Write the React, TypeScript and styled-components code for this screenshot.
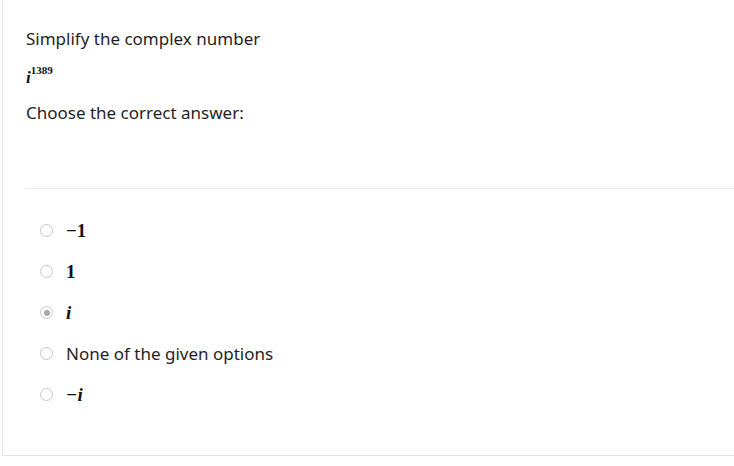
import React from "react";
import styled, { createGlobalStyle } from "styled-components";

const Global = createGlobalStyle`
  html, body { margin: 0; padding: 0; background: #ffffff; overflow: hidden; }
  body { font-family: "Noto Sans", "Open Sans", sans-serif; color: #1f1f1f; }
`;

const Card = styled.div`
  margin-left: 2px;
  width: 760px;
  height: 456px;
  box-sizing: border-box;
  border-left: 1px solid #e4e4e4;
  border-bottom: 1px solid #e4e4e4;
  padding: 28px 0 0 23px;
  display: flex;
  flex-direction: column;
`;

const Prompt = styled.div`
  font-size: 17px;
  line-height: 22px;
  color: #1f1f1f;
`;

const MathLine = styled.div`
  margin-top: 15px;
  height: 22px;
  line-height: 22px;
  font-family: "Liberation Serif", "DejaVu Serif", serif;
  color: #111;
`;

const MathI = styled.span`
  font-style: italic;
  font-weight: bold;
  font-size: 17px;
`;

const Sup = styled.span`
  display: inline-block;
  font-weight: bold;
  font-size: 11px;
  line-height: 11px;
  vertical-align: 9px;
`;

const Instruction = styled.div`
  margin-top: 15px;
  font-size: 17px;
  line-height: 22px;
`;

const Divider = styled.div`
  margin-top: 64px;
  height: 1px;
  background: #ececec;
`;

const Options = styled.div`
  margin-top: 21px;
  display: flex;
  flex-direction: column;
`;

const Option = styled.label`
  display: flex;
  align-items: center;
  height: 41px;
  gap: 13px;
  padding-left: 14px;
`;

const Radio = styled.span<{ $checked?: boolean }>`
  width: 13px;
  height: 13px;
  border-radius: 50%;
  border: 1.5px solid #c6c6c6;
  box-sizing: border-box;
  display: flex;
  align-items: center;
  justify-content: center;
  background: #fff;
  &::after {
    content: "";
    width: 6px;
    height: 6px;
    border-radius: 50%;
    background: ${(p) => (p.$checked ? "#a8a8a8" : "transparent")};
  }
`;

const MathText = styled.span<{ $italic?: boolean }>`
  font-family: "Liberation Serif", "DejaVu Serif", serif;
  font-weight: bold;
  font-size: 19px;
  font-style: ${(p) => (p.$italic ? "italic" : "normal")};
  color: #111;
`;

const PlainText = styled.span`
  font-size: 17px;
  color: #1f1f1f;
`;

const options: { label: string; math: boolean; italic?: boolean; checked?: boolean }[] = [
  { label: "\u22121", math: true },
  { label: "1", math: true },
  { label: "i", math: true, italic: true, checked: true },
  { label: "None of the given options", math: false },
  { label: "\u2212i", math: true, italic: true },
];

export default function App() {
  return (
    <>
      <Global />
      <Card>
        <Prompt>Simplify the complex number</Prompt>
        <MathLine>
          <MathI>i</MathI>
          <Sup>1389</Sup>
        </MathLine>
        <Instruction>Choose the correct answer:</Instruction>
        <Divider />
        <Options>
          {options.map((o) => (
            <Option key={o.label}>
              <Radio $checked={o.checked} />
              {o.math ? (
                <MathText $italic={o.italic}>{o.label}</MathText>
              ) : (
                <PlainText>{o.label}</PlainText>
              )}
            </Option>
          ))}
        </Options>
      </Card>
    </>
  );
}
